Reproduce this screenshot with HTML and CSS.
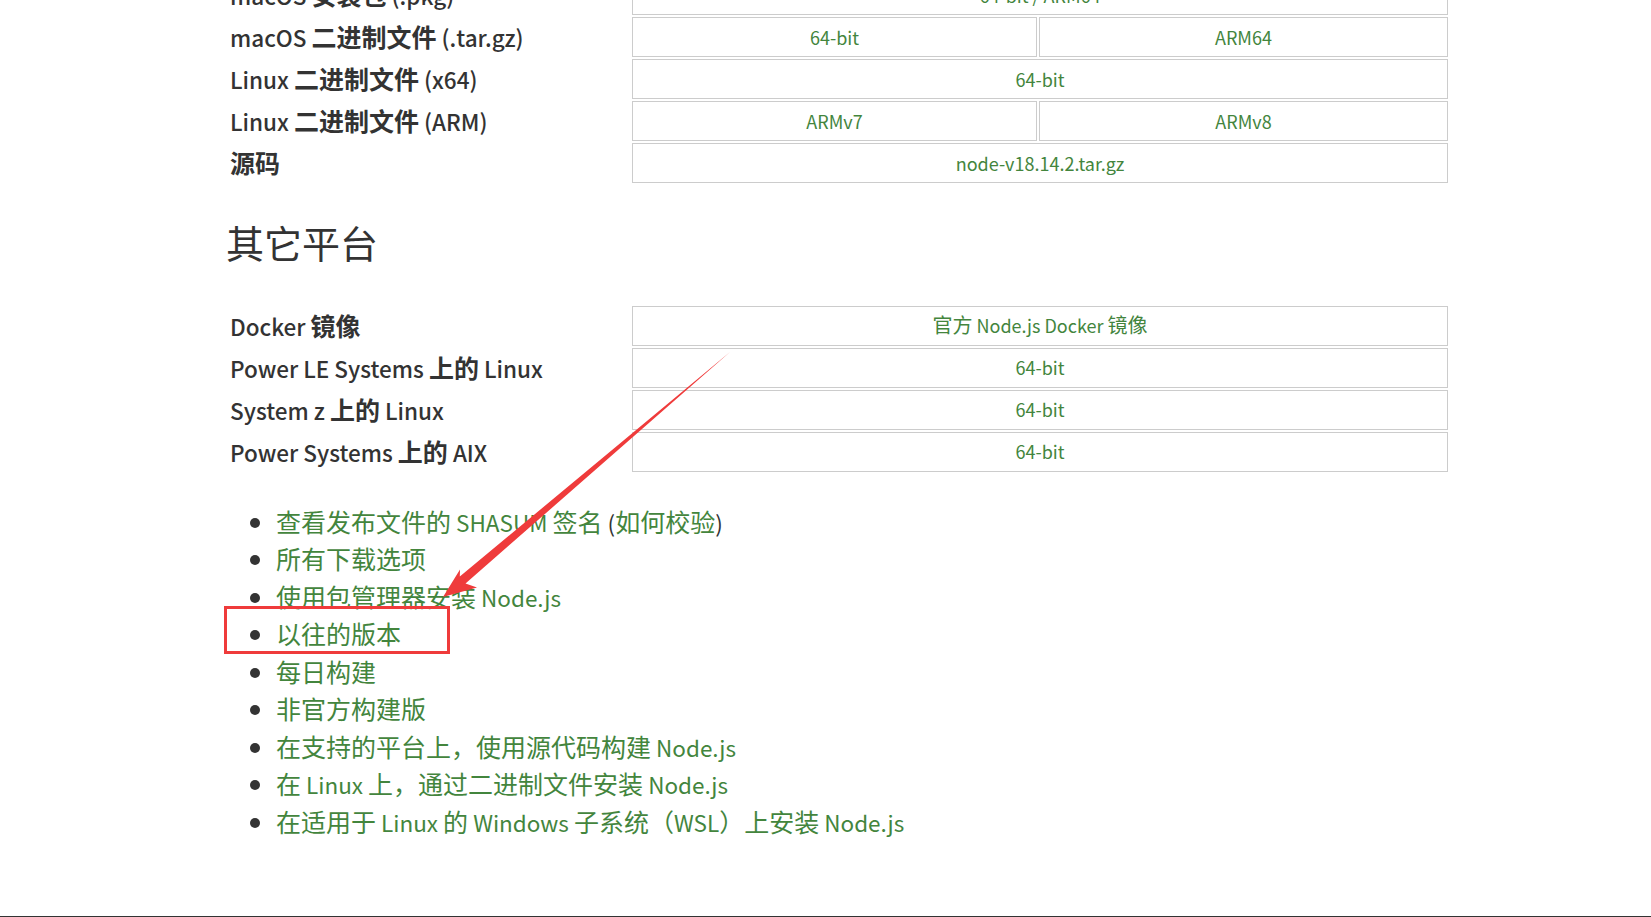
FILE: index.html
```html
<!DOCTYPE html>
<html lang="zh-CN">
<head>
    <meta charset="UTF-8">
    <meta name="viewport" content="width=device-width, initial-scale=1.0">
    <title>下载 | Node.js</title>
    <link rel="stylesheet" href="styles.css">
</head>
<body>
    <main>
        <table class="downloads downloads-first">
            <colgroup>
                <col class="col-label">
                <col class="col-a">
                <col class="col-b">
            </colgroup>
            <tr>
                <th><span class="en">macOS </span>安装包<span class="en"> (.pkg)</span></th>
                <td colspan="2"><a href="#"><span class="en">64-bit / ARM64</span></a></td>
            </tr>
            <tr>
                <th><span class="en">macOS </span>二进制文件<span class="en"> (.tar.gz)</span></th>
                <td><a href="#"><span class="en">64-bit</span></a></td>
                <td><a href="#"><span class="en">ARM64</span></a></td>
            </tr>
            <tr>
                <th><span class="en">Linux </span>二进制文件<span class="en"> (x64)</span></th>
                <td colspan="2"><a href="#"><span class="en">64-bit</span></a></td>
            </tr>
            <tr>
                <th><span class="en">Linux </span>二进制文件<span class="en"> (ARM)</span></th>
                <td><a href="#"><span class="en">ARMv7</span></a></td>
                <td><a href="#"><span class="en">ARMv8</span></a></td>
            </tr>
            <tr>
                <th>源码</th>
                <td colspan="2"><a href="#"><span class="en">node-v18.14.2.tar.gz</span></a></td>
            </tr>
        </table>

        <h2>其它平台</h2>

        <table class="downloads">
            <colgroup>
                <col class="col-label">
                <col class="col-a">
                <col class="col-b">
            </colgroup>
            <tr>
                <th><span class="en">Docker </span>镜像</th>
                <td colspan="2"><a href="#">官方<span class="en"> Node.js Docker </span>镜像</a></td>
            </tr>
            <tr>
                <th><span class="en">Power LE Systems </span>上的<span class="en"> Linux</span></th>
                <td colspan="2"><a href="#"><span class="en">64-bit</span></a></td>
            </tr>
            <tr>
                <th><span class="en">System z </span>上的<span class="en"> Linux</span></th>
                <td colspan="2"><a href="#"><span class="en">64-bit</span></a></td>
            </tr>
            <tr>
                <th><span class="en">Power Systems </span>上的<span class="en"> AIX</span></th>
                <td colspan="2"><a href="#"><span class="en">64-bit</span></a></td>
            </tr>
        </table>

        <ul class="links">
            <li><a href="#">查看发布文件的<span class="en"> SHASUM </span>签名</a><span class="en"> (</span><a href="#">如何校验</a><span class="en">)</span></li>
            <li><a href="#">所有下载选项</a></li>
            <li><a href="#">使用包管理器安装<span class="en"> Node.js</span></a></li>
            <li><a href="#">以往的版本</a></li>
            <li><a href="#">每日构建</a></li>
            <li><a href="#">非官方构建版</a></li>
            <li><a href="#">在支持的平台上，使用源代码构建<span class="en"> Node.js</span></a></li>
            <li><a href="#">在<span class="en"> Linux </span>上，通过二进制文件安装<span class="en"> Node.js</span></a></li>
            <li><a href="#">在适用于<span class="en"> Linux </span>的<span class="en"> Windows </span>子系统（<span class="en">WSL</span>）上安装<span class="en"> Node.js</span></a></li>
        </ul>
    </main>

    <footer></footer>

    <!-- screenshot markup: arrow + box -->
    <svg class="annotations" width="1651" height="917" viewBox="0 0 1651 917">
        <polygon points="730,352 465.5,583.5 477,587.5 443,597 460,569.5 459.8,576.5" fill="#ef3b3b"/>
        <rect x="225.5" y="607.5" width="223" height="45" fill="none" stroke="#ef3b3b" stroke-width="3"/>
    </svg>
</body>
</html>
```

FILE: styles.css
```css
body {
    margin: 0;
    font-family: "Noto Sans CJK SC", "Noto Sans", sans-serif;
    font-size: 25px;
    color: #333;
    background: #fff;
    position: relative;
    overflow: hidden;
}

main {
    padding: 0 0 76px 228px;
}

a {
    color: #43853d;
    text-decoration: none;
}

/* latin runs: the CJK font draws latin ~10% larger */
.en {
    font-size: 0.9em;
}

.downloads {
    border-collapse: separate;
    border-spacing: 2px;
    table-layout: fixed;
    width: 1222px;
}

.downloads-first {
    margin-top: -27px;
}

.col-label {
    width: 400px;
}

.col-a {
    width: 405px;
}

.col-b {
    width: 409px;
}

.downloads th,
.downloads td {
    box-sizing: border-box;
    height: 40px;
    padding: 0 0 2px;
    vertical-align: middle;
}

.downloads th {
    text-align: left;
    font-weight: 700;
    white-space: nowrap;
}

.downloads th .en {
    font-weight: 500;
}

.downloads td {
    border: 1px solid #ccc;
    text-align: center;
    font-size: 20px;
}

h2 {
    font-size: 38px;
    font-weight: 400;
    line-height: 1.2;
    margin: 34px 0 39px -2px;
}

.links {
    margin: 29px 0 0;
    padding-left: 48px;
    line-height: 1.5;
}

footer {
    background: #333;
    height: 40px;
}

.annotations {
    position: absolute;
    top: 0;
    left: 0;
    pointer-events: none;
}
```
